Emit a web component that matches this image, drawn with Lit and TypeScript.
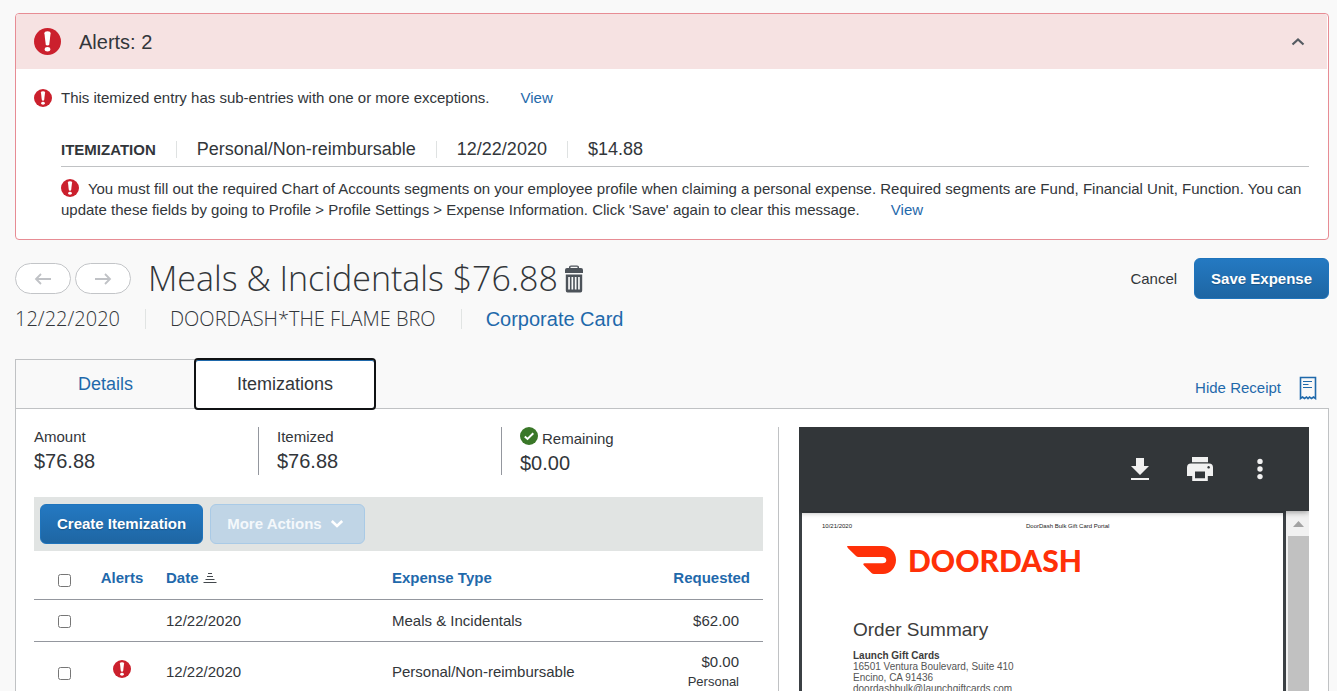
import { LitElement, html, css, nothing } from "lit";
import { customElement, state } from "lit/decorators.js";

const FONT = css`"Liberation Sans", Arial, Helvetica, sans-serif`;

@customElement("alert-icon")
class AlertIcon extends LitElement {
  static styles = css`
    :host { display: inline-block; width: 18px; height: 18px; flex: none; }
    svg { display: block; width: 100%; height: 100%; }
  `;
  render() {
    return html`<svg viewBox="0 0 27 27" role="img" aria-label="Alert">
      <circle cx="13.5" cy="13.5" r="13.5" fill="#cb202d"></circle>
      <path d="M10.4 5.2Q10.4 3.2 13.5 3.2T16.6 5.2L15.3 16.2Q15 17.6 13.5 17.6T11.700 16.2Z" fill="#fff"></path>
      <ellipse cx="13.5" cy="21.3" rx="2.8" ry="2.2" fill="#fff"></ellipse>
    </svg>`;
  }
}

@customElement("alerts-card")
class AlertsCard extends LitElement {
  static styles = css`
    :host {
      display: block; background: #fff; border: 1px solid #e78c94;
      border-radius: 4px; color: #32363a;
      font: 15px/21px ${FONT};
    }
    .head {
      display: flex; align-items: center; gap: 18px; height: 55px;
      margin-right: 1px; padding: 0 17px 0 18px; background: #f6e2e2;
      border-radius: 3px 3px 0 0;
    }
    .head alert-icon { width: 27px; height: 27px; }
    h2 { margin: 0; font-size: 20px; font-weight: 400; line-height: 28px; flex: 1; }
    .toggle { border: 0; padding: 0; background: none; width: 24px; height: 24px; display: grid; place-items: center; }
    .body { padding: 18px 19px 19px 18px; }
    .line { display: flex; align-items: center; gap: 9px; }
    .line a { margin-left: 22px; }
    a { color: #1f69ab; text-decoration: none; }
    .message a { margin-left: 27px; }
    .nested { margin-left: 27px; }
    .summary {
      display: flex; align-items: center; gap: 20px; margin-top: 28px; padding-bottom: 4px;
      height: 26px; border-bottom: 1px solid #c0c2c4; font-size: 18px;
    }
    .summary strong { font-size: 15px; }
    .summary span { border-left: 1px solid #dfe2e2; padding-left: 20px; line-height: 17px; }
    .message { margin: 11px 0 0; }
    .message alert-icon { vertical-align: -3px; margin-right: 5px; }
  `;
  render() {
    return html`
      <div class="head">
        <alert-icon></alert-icon>
        <h2>Alerts: 2</h2>
        <button class="toggle" aria-label="Collapse alerts">
          <svg width="14" height="10" viewBox="0 0 14 10"><path d="M1.5 7.5L7 2.5L12.5 7.5" fill="none" stroke="#555b62" stroke-width="2.2"></path></svg>
        </button>
      </div>
      <div class="body">
        <div class="line">
          <alert-icon></alert-icon>
          <span>This itemized entry has sub-entries with one or more exceptions.</span><a href="#">View</a>
        </div>
        <div class="nested">
          <div class="summary">
            <strong>ITEMIZATION</strong><span>Personal/Non-reimbursable</span><span>12/22/2020</span><span>$14.88</span>
          </div>
          <p class="message">
            <alert-icon></alert-icon>
            You must fill out the required Chart of Accounts segments on your employee profile when claiming a personal
            expense. Required segments are Fund, Financial Unit, Function. You can update these fields by going to
            Profile &gt; Profile Settings &gt; Expense Information. Click 'Save' again to clear this message.
            <a href="#">View</a>
          </p>
        </div>
      </div>`;
  }
}

interface Item { date: string; type: string; amount: string; note?: string; alert?: boolean; }

@customElement("itemization-panel")
class ItemizationPanel extends LitElement {
  @state() items: Item[] = [
    { date: "12/22/2020", type: "Meals & Incidentals", amount: "$62.00" },
    { date: "12/22/2020", type: "Personal/Non-reimbursable", amount: "$0.00", note: "Personal", alert: true },
  ];
  static styles = css`
    :host { display: block; padding-right: 15px; border-right: 1px solid #c0c2c4; color: #32363a; font: 15px/20px ${FONT}; }
    .stats { display: grid; grid-template-columns: repeat(3, 1fr); }
    .stat { height: 48px; margin-right: 18px; border-right: 1px solid #94979e; }
    .stat:last-child { border-right: 0; }
    .label { display: flex; align-items: flex-start; gap: 4px; line-height: 20px; }
    .label.ok { line-height: 24px; height: 22px; }
    .value { font-size: 20px; line-height: 28px; }
    .bar { display: flex; gap: 7px; margin-top: 22px; padding: 7px 6px; background: #e1e4e3; }
    .btn {
      height: 40px; padding: 0 16px; border: 1px solid #1f74bc; border-radius: 6px; color: #fff;
      background: linear-gradient(#2479c2, #1e66a3); font: bold 15px/20px ${FONT};
      text-shadow: 0 1px 1px rgba(0, 0, 0, .25); white-space: nowrap;
    }
    .btn.off {
      display: flex; align-items: center; gap: 8px; padding-right: 20px; background: #c0d5e6; border-color: #a9cae6;
      color: #f4f8fb; text-shadow: none;
    }
    table { width: 100%; border-collapse: collapse; table-layout: fixed; }
    th, td { padding: 0 0 0 16px; text-align: left; border-bottom: 1px solid #94979e; font-weight: 400; }
    .c-check { width: 60px; }
    .c-alert { width: 56px; }
    .c-date { width: 226px; }
    .c-req { width: 140px; }
    th { height: 48px; }
    td { height: 41px; }
    td.tall { height: 60px; }
    th.mid, td.mid { padding: 0; text-align: center; }
    .mid alert-icon { vertical-align: middle; margin-bottom: 6px; }
    input { width: 13px; height: 13px; margin: 0; vertical-align: middle; }
    .sort { padding: 0; margin: 6px 0 0; border: 0; background: none; color: #1f69ab; font: bold 15px/20px ${FONT}; }
    thead input { margin-top: 10px; }
    th.req { text-align: right; padding-right: 13px; }
    td.req { text-align: right; padding-right: 24px; }
    .note { font-size: 13px; line-height: 20px; }
  `;
  render() {
    return html`
      <div class="stats">
        <div class="stat"><div class="label">Amount</div><div class="value">$76.88</div></div>
        <div class="stat"><div class="label">Itemized</div><div class="value">$76.88</div></div>
        <div class="stat">
          <div class="label ok">
            <svg width="18" height="18" viewBox="0 0 18 18"><circle cx="9" cy="9" r="9" fill="#3a7728"></circle><path d="M4.8 9.6L7.5 12L13.3 6.3" fill="none" stroke="#fff" stroke-width="2"></path></svg>
            Remaining
          </div>
          <div class="value">$0.00</div>
        </div>
      </div>
      <div class="bar">
        <button class="btn">Create Itemization</button>
        <button class="btn off" disabled>More Actions
          <svg width="14" height="10" viewBox="0 0 14 10"><path d="M1.8 2L7 7L12.2 2" fill="none" stroke="#fff" stroke-width="2.6"></path></svg>
        </button>
      </div>
      <table>
        <colgroup><col class="c-check"><col class="c-alert"><col class="c-date"><col><col class="c-req"></colgroup>
        <thead>
          <tr>
            <th class="mid"><input type="checkbox" aria-label="Select all"></th>
            <th class="mid"><button class="sort">Alerts</button></th>
            <th><button class="sort">Date
              <svg width="14" height="10" viewBox="0 0 14 10"><path d="M5 .5h4M4 3.5h6M2.5 6.5h9M.5 9.5h13" stroke="#43484d" fill="none"></path></svg></button></th>
            <th><button class="sort">Expense Type</button></th>
            <th class="req"><button class="sort">Requested</button></th>
          </tr>
        </thead>
        <tbody>
          ${this.items.map((i) => html`<tr>
            <td class="mid ${i.note ? "tall" : ""}"><input type="checkbox" aria-label="Select ${i.type}"></td>
            <td class="mid">${i.alert ? html`<alert-icon></alert-icon>` : nothing}</td>
            <td>${i.date}</td>
            <td>${i.type}</td>
            <td class="req">${i.amount}${i.note ? html`<div class="note">${i.note}</div>` : nothing}</td>
          </tr>`)}
        </tbody>
      </table>`;
  }
}

@customElement("receipt-viewer")
class ReceiptViewer extends LitElement {
  static styles = css`
    :host { display: flex; flex-direction: column; background: #3b4044; font-family: ${FONT}; overflow: hidden; }
    .tools {
      display: flex; align-items: center; justify-content: flex-end; gap: 24px; height: 84px; flex: none;
      padding-right: 31px; background: #323639; box-shadow: 0 1px 6px rgba(0, 0, 0, .4); z-index: 1;
    }
    .tools button { width: 36px; height: 36px; padding: 0; border: 0; background: none; display: grid; place-items: center; }
    .tools svg { fill: #f1f1f1; }
    .view { display: flex; flex: 1; min-height: 0; }
    .page { flex: 1; margin: 2px 3px 0; background: #fff; color: #3c3c3c; overflow: hidden; }
    .meta { display: flex; gap: 174px; padding: 8px 20px 0; font-size: 6px; line-height: 10px; color: #222; }
    .logo { display: flex; align-items: center; gap: 11px; margin: 10px 0 0 45px; height: 38px; color: #ff3008; font: 900 30px/38px Lato, sans-serif; }
    .details { padding: 40px 51px 0; font-size: 10px; line-height: 11px; color: #555; }
    h3 { margin: 0 0 9px; font-size: 19px; font-weight: 400; line-height: 22px; color: #3c3c3c; }
    .details strong { color: #3c3c3c; }
    .scroll { width: 23px; background: #f1f1f1; display: flex; flex-direction: column; }
    .scroll svg { display: block; height: 25px; width: 100%; }
    .thumb { flex: 1; margin-left: 2px; background: #c1c1c1; }
  `;
  render() {
    return html`
      <div class="tools">
        <button aria-label="Download"><svg width="18" height="22" viewBox="0 0 18 22"><path d="M5 0h8v8h5L9 17L0 8h5zM0 20h18v2.4H0z"></path></svg></button>
        <button aria-label="Print"><svg width="26" height="24" viewBox="0 0 26 24"><path d="M5 0h16v5.2H5zM4 6.6h18a4 4 0 0 1 4 4V19h-5.2v5H5.2v-5H0v-8.4a4 4 0 0 1 4-4zM8 14.6v6.6h10v-6.6zM21.6 9a1.3 1.3 0 1 0 .01 0z" fill-rule="evenodd"></path></svg></button>
        <button aria-label="More"><svg width="6" height="22" viewBox="0 0 6 22"><circle cx="3" cy="3.4" r="2.7"></circle><circle cx="3" cy="11" r="2.7"></circle><circle cx="3" cy="18.6" r="2.7"></circle></svg></button>
      </div>
      <div class="view">
        <div class="page">
          <div class="meta"><span>10/21/2020</span><span>DoorDash Bulk Gift Card Portal</span></div>
          <div class="logo">
            <svg width="50" height="28" viewBox="0 0 50 28" fill="#ff3008"><path d="M0 0H35C43 0 49 6 49 14S43 28 36 28H27Q25.600 28 24.500 27L16.800 19.200Q15.500 17.500 17.500 17.200H35.500C38 17.200 39.300 16 39.300 14.200S38 11 35.500 11H11.500Q10 11 9 10L.8 2Z"></path></svg>
            <span>DOORDASH</span>
          </div>
          <div class="details">
            <h3>Order Summary</h3>
            <strong>Launch Gift Cards</strong><br>16501 Ventura Boulevard, Suite 410<br>Encino, CA 91436<br>doordashbulk@launchgiftcards.com
          </div>
        </div>
        <div class="scroll">
          <svg viewBox="0 0 23 25"><path d="M7 16L12.500 10L18 16Z" fill="#a3a3a3"></path></svg>
          <div class="thumb"></div>
        </div>
      </div>`;
  }
}

@customElement("app-root")
class AppRoot extends LitElement {
  static styles = css`
    :host {
      display: flex; flex-direction: column; box-sizing: border-box; height: 100vh; overflow: hidden;
      padding: 13px 8px 0 15px; background: #f9f9f9; color: #32363a; font: 15px/20px ${FONT};
    }
    alerts-card { flex: none; }
    a { color: #1f69ab; text-decoration: none; }
    .title { display: flex; align-items: center; margin-top: 18px; height: 41px; flex: none; }
    .nav { display: flex; gap: 4px; margin-right: 17px; }
    .nav button { width: 56px; height: 31px; padding: 0; border: 1px solid #c3c5c8; border-radius: 16px; background: #fff; display: grid; place-items: center; }
    h1 { margin: 0; font: 300 34px/41px "Open Sans", sans-serif; white-space: nowrap; }
    .trash { margin-left: 7px; padding: 0; border: 0; background: none; height: 28px; }
    .trash svg { display: block; }
    .actions { display: flex; align-items: center; gap: 17px; margin-left: auto; }
    .plain { padding: 0; border: 0; background: none; color: #32363a; font: 15px/20px ${FONT}; }
    .save {
      height: 41px; padding: 0 16px; border: 1px solid #1f74bc; border-radius: 6px; color: #fff;
      background: linear-gradient(#2479c2, #1e66a3); font: bold 15px/20px ${FONT}; text-shadow: 0 1px 1px rgba(0, 0, 0, .25);
    }
    .sub { display: flex; align-items: center; height: 40px; gap: 25px; flex: none; font: 300 20px/20px "Open Sans", sans-serif; }
    .sub > * + * { border-left: 1px solid #e1e4e3; padding-left: 24px; }
    .sub a { font: 20px/20px ${FONT}; }
    .tabs { display: flex; margin-top: 19px; height: 51px; margin-bottom: -1px; flex: none; }
    .tab { box-sizing: border-box; width: 180px; border: 1px solid #c0c2c4; border-width: 1px 0 0 1px; margin: 1px 0; background: none; color: #1f69ab; font: 18px/24px ${FONT}; }
    .tab.on { width: 182px; margin: 0 0 0 -1px; height: 52px; border: 2px solid #101214; border-radius: 4px; background: #fff; color: #32363a; box-shadow: inset 0 1px #1f69ab; z-index: 1; }
    .hide { display: flex; align-items: center; gap: 18px; margin-left: auto; padding: 9px 12px 0 0; }
    .panel {
      display: grid; grid-template-columns: 3fr 2fr; flex: 1; min-height: 0; border: 1px solid #c0c2c4;
      border-bottom: 0; padding: 18px 19px 0 18px; background: #fff;
    }
    itemization-panel { margin-right: 20px; }
  `;
  render() {
    return html`
      <alerts-card></alerts-card>
      <div class="title">
        <div class="nav">
          <button aria-label="Previous expense"><svg width="18" height="12" viewBox="0 0 18 12" fill="none" stroke="#c0c2c6" stroke-width="1.8"><path d="M17 6H2M7 1L2 6L7 11"></path></svg></button>
          <button aria-label="Next expense"><svg width="18" height="12" viewBox="0 0 18 12" fill="none" stroke="#c0c2c6" stroke-width="1.8"><path d="M1 6H16M11 1L16 6L11 11"></path></svg></button>
        </div>
        <h1>Meals &amp; Incidentals $76.88</h1>
        <button class="trash" aria-label="Delete expense">
          <svg width="18" height="28" viewBox="0 0 18 28"><path d="M0 8V5Q0 3 2 3H4V2Q4 .4 6 .4H12Q14 .4 14 2V3H16Q18 3 18 5V8ZM5.500 3H12.500V1.800H5.500ZM.8 9.500H17.200V25.500Q17.200 27.400 15.500 27.400H2.500Q.8 27.400 .8 25.500ZM3.200 12V24.500H4.900V12ZM6.500 12V24.500H8.200V12ZM9.800 12V24.500H11.500V12ZM13.100 12V24.500H14.800V12Z" fill="#4d535a" fill-rule="evenodd"></path></svg>
        </button>
        <div class="actions"><button class="plain">Cancel</button><button class="save">Save Expense</button></div>
      </div>
      <div class="sub"><span>12/22/2020</span><span>DOORDASH*THE FLAME BRO</span><a href="#">Corporate Card</a></div>
      <div class="tabs" role="tablist">
        <button class="tab" role="tab">Details</button>
        <button class="tab on" role="tab" aria-selected="true">Itemizations</button>
        <a class="hide" href="#">Hide Receipt
          <svg width="18" height="24" viewBox="0 0 18 24" fill="none" stroke="#1f69ab" stroke-width="1.600"><path d="M1.500 22.500V1.500H16.500V22.500L14.500 21L12.500 22.500L10.500 21L9 22.500L7.500 21L5.500 22.500L3.500 21Z"></path><path d="M4 5.500H13M4 8.500H9.500M4 11.500H13" stroke-width="1.200"></path></svg>
        </a>
      </div>
      <div class="panel">
        <itemization-panel></itemization-panel>
        <receipt-viewer></receipt-viewer>
      </div>`;
  }
}
